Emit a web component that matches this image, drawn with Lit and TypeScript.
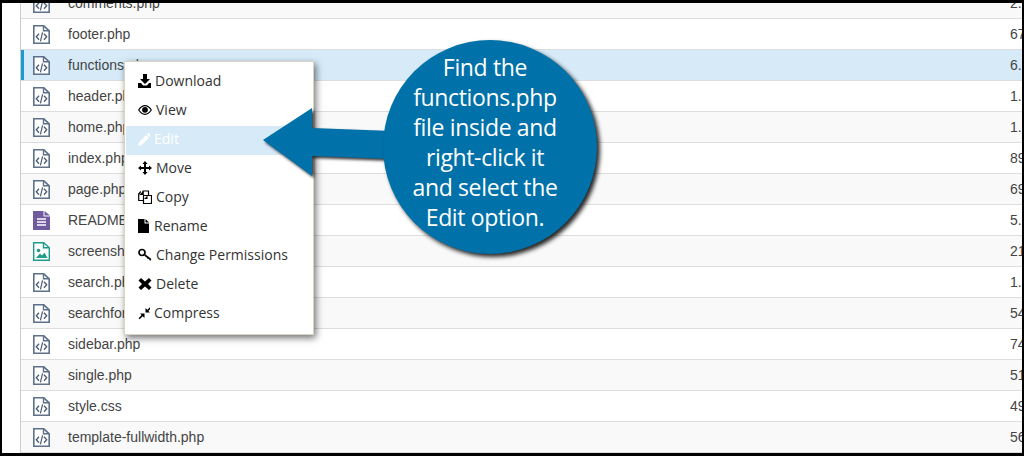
import { LitElement, html, css, svg } from "lit";
import { customElement } from "lit/decorators.js";

const rows: [string, string, string][] = [
  ["comments.php", "2.", "code"],
  ["footer.php", "67", "code"],
  ["functions.php", "6.", "code"],
  ["header.php", "1.", "code"],
  ["home.php", "1.", "code"],
  ["index.php", "89", "code"],
  ["page.php", "69", "code"],
  ["README.md", "5.", "text"],
  ["screenshot.png", "21", "image"],
  ["search.php", "1.", "code"],
  ["searchform.php", "54", "code"],
  ["sidebar.php", "74", "code"],
  ["single.php", "51", "code"],
  ["style.css", "49", "code"],
  ["template-fullwidth.php", "56", "code"],
];

const menuIcons: Record<string, unknown> = {
  download: svg`<path d="M5 0h4v5h3L7 10 2 5h3zM0 9h3l2 2.500h4L11 9h3v5H0z" fill="#000"/>`,
  view: svg`<path d="M.7 7c2-3 3.900-4.300 6.300-4.300S11.300 4 13.300 7c-2 3-3.900 4.300-6.300 4.300S2.700 10 .7 7z" fill="none" stroke="#000" stroke-width="1.200"/><circle cx="7" cy="6.800" r="2.900" fill="#000"/>`,
  edit: svg`<path d="M10.500.8l2.700 2.700-1.500 1.500L9 2.300zM8.200 3.100l2.700 2.700-7 7L0 14l1.200-3.900z" fill="#fff"/>`,
  move: svg`<path d="M7 0l2.600 3H8v3h3V4.400L14 7l-3 2.600V8H8v3h1.600L7 14l-2.600-3H6V8H3v1.600L0 7l3-2.600V6h3V3H4.400z" fill="#000"/>`,
  copy: svg`<path d="M5 5V1h5.500v4M2.800 1.500L.7 4v6.500H5M5.500 5.500h8v8h-8z" fill="none" stroke="#000" stroke-width="1.200"/><path d="M5.500 1L1 5h4.500zM9.500 5.500L6 9h3.500z" fill="#000"/>`,
  rename: svg`<path d="M0 0h6.500v4.500H11V14H0zM7.500 0L11 3.500H7.500z" fill="#000"/>`,
  key: svg`<path d="M6.800 7l6 4.600" stroke="#000" stroke-width="1.700" fill="none"/><circle cx="4" cy="4.500" r="3" fill="none" stroke="#000" stroke-width="1.700"/><path d="M9.500 10.500l1.300-1.400M11.800 12.300l1-1.200" stroke="#000" stroke-width="1.300"/>`,
  del: svg`<path d="M3 1l4 3.500L11 1l2.500 2.500L10 7l3.500 3.500L11 13 7 9.500 3 13 .5 10.500 4 7 .5 3.500z" fill="#000"/>`,
  compress: svg`<path d="M7.500 6.500V2L9.300 3.800 12.400.8l1 1-3 3.100 1.600 1.600zM6.500 7.500V12L4.700 10.200 1.600 13.200l-1-1 3-3.100L2 7.500z" fill="#000"/>`,
};

const menu: [string, string, number][] = [
  ["Download", "download", 13],
  ["View", "view", 14],
  ["Edit", "edit", 12],
  ["Move", "move", 14],
  ["Copy", "copy", 14],
  ["Rename", "rename", 12],
  ["Change Permissions", "key", 14],
  ["Delete", "del", 14],
  ["Compress", "compress", 12],
];

const fileIcon = (kind: string) => {
  if (kind === "text")
    return svg`<svg class="file" viewBox="0 0 17 19"><path d="M0 0h10.500v5.500H17V19H0z" fill="#6f5b9e"/><path d="M11.500 0L17 4.500h-5.500z" fill="#6f5b9e"/><path d="M4 8h9M4 11h9M4 14h9" stroke="#fff" stroke-width="1.700"/></svg>`;
  if (kind === "image")
    return svg`<svg class="file" viewBox="0 0 17 19"><path d="M.7.7h10l5.600 5v12.600H.7z" fill="#fff" stroke="#1f9c8c" stroke-width="1.400"/><path d="M10.500.7v5h5.800" fill="none" stroke="#1f9c8c" stroke-width="1.400"/><circle cx="5.500" cy="8.500" r="1.800" fill="#1f9c8c"/><path d="M3 16l4-4.500 2 2 2.500-3 3 5.500z" fill="#1f9c8c"/></svg>`;
  return svg`<svg class="file" viewBox="0 0 17 19"><path d="M.8.8h10l5.400 5v12.400H.8z" fill="#fff" stroke="#5f7089" stroke-width="1.600"/><path d="M10.500.8v5h5.700" fill="none" stroke="#5f7089" stroke-width="1.400"/><path d="M6 8.800L3.300 11.800l2.700 3M11 8.800l2.700 3-2.700 3" fill="none" stroke="#4a5a72" stroke-width="1.300"/><path d="M9.600 7.300l-2.200 9" stroke="#4a5a72" stroke-width="1.200"/></svg>`;
};

@customElement("app-root")
export class AppRoot extends LitElement {
  static styles = css`
    :host { display: block; width: 1024px; height: 456px; font-family: "Liberation Sans", Arial, sans-serif; }
    .frame { position: relative; box-sizing: border-box; width: 1024px; height: 456px; background: #fff; overflow: hidden;
      border: solid #000; border-width: 3px 2px 3px 2px; }
    .table { margin: -15px 0 0 18px; border-left: 1px solid #ccc; }
    .row { box-sizing: border-box; height: 31px; display: grid; grid-template-columns: 17px 1fr 12px; column-gap: 18px;
      align-items: center; padding-left: 12px; border-bottom: 1.500px solid #ddd; font-size: 14px; color: #444; white-space: nowrap; }
    .row.odd { background: #f9f9f9; }
    .row.sel { background: #d6eaf8; box-shadow: inset 3px 0 0 #1b9ad6; }
    .file { width: 17px; height: 19px; display: block; }
    .menu { position: absolute; left: 122px; top: 58px; box-sizing: border-box; width: 190px; height: 274px; background: #fff;
      border: 1px solid #d8d4c4; padding: 6px 0 0 1px; box-shadow: 2px 3px 7px rgba(0, 0, 0, 0.55);
      font-family: "Open Sans", sans-serif; font-size: 14px; color: #333; }
    .item { box-sizing: border-box; height: 29px; display: flex; align-items: center; gap: 4px; padding: 0 0 4px 12px; }
    .item svg { height: 14px; display: block; flex: none; }
    .item.hot { background: #d6eaf8; color: #fff; }
    .callout { position: absolute; left: 256px; top: 34px; }
    .arrow { position: absolute; left: 0; top: 0; width: 140px; height: 130px; overflow: visible; filter: drop-shadow(2px 2px 1.500px rgba(0, 0, 0, 0.8)); }
    .circle { position: absolute; left: 125px; top: 3px; box-sizing: border-box; width: 214px; height: 214px; border-radius: 50%; background: #0071a9;
      padding: 0 10px 10px 0; box-shadow: 3px 3px 4px rgba(0, 0, 0, 0.85); display: flex; align-items: center; justify-content: center; text-align: center;
      font-family: "Open Sans", sans-serif; font-size: 23px; line-height: 30px; color: #fff; white-space: pre-line; letter-spacing: -0.35px; }
  `;

  render() {
    return html`<div class="frame">
      <div class="table">
        ${rows.map(
          ([name, size, kind], i) => html`<div class="row ${i === 2 ? "sel" : i % 2 === 0 ? "odd" : ""}">
            ${fileIcon(kind)}
            <span>${name}</span>
            <span>${size}</span>
          </div>`
        )}
      </div>
      <div class="menu">
        ${menu.map(
          ([label, icon, w]) => html`<div class="item ${label === "Edit" ? "hot" : ""}">
            <svg viewBox="0 0 ${w} 14" style="width:${w}px">${menuIcons[icon]}</svg>
            <span>${label}</span>
          </div>`
        )}
      </div>
      <div class="callout">
        <svg class="arrow" viewBox="0 0 140 130"><path d="M5 103L54 71V91L134 94V122L54 119V139L5 103z" fill="#0071a9"/></svg>
        <div class="circle">Find the
functions.php
file inside and
right-click it
and select the
Edit option.</div>
      </div>
    </div>`;
  }
}
